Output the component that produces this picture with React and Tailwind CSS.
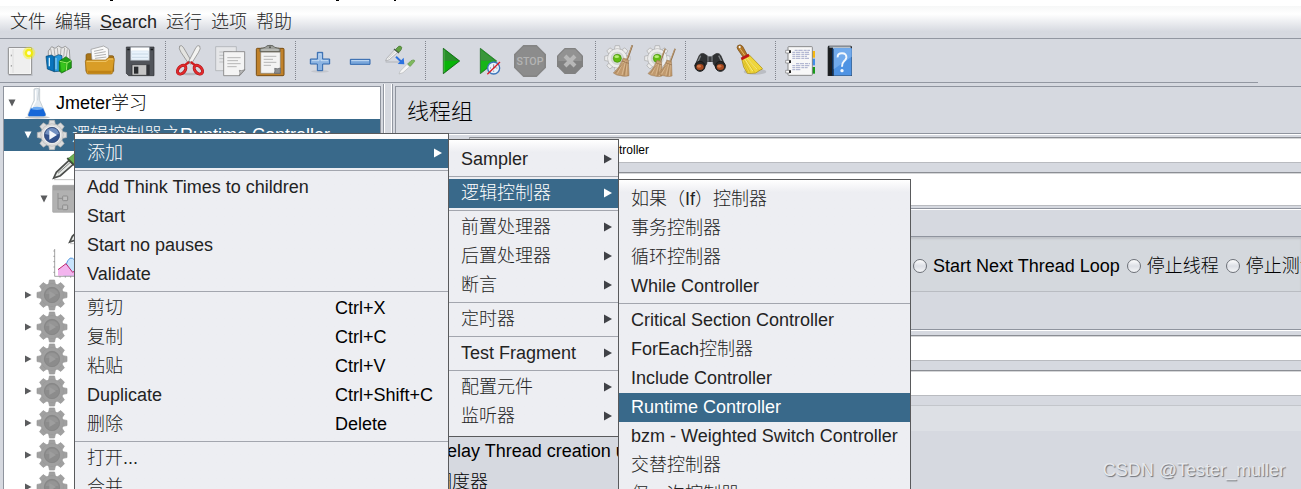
import { useState } from "react";

const TEETH = [0, 45, 90, 135, 180, 225, 270, 315];

function Gear({ cx, cy, r, fill, stroke }) {
  return (
    <g fill={fill} stroke={stroke} strokeWidth="2" strokeLinejoin="round">
      {TEETH.map((angle) => (
        <path
          key={angle}
          transform={`rotate(${angle} ${cx} ${cy})`}
          d={`M${cx - r * 0.24} ${cy - r * 0.66}L${cx - r * 0.17} ${cy - r}H${cx + r * 0.17}L${cx + r * 0.24} ${cy - r * 0.66}z`}
        />
      ))}
      <circle cx={cx} cy={cy} r={r * 0.76} />
      <circle cx={cx} cy={cy} r={r * 0.72} stroke="none" />
    </g>
  );
}

function Broom({ transform }) {
  return (
    <g transform={transform}>
      <path d="M97 19L80 66" stroke="#8a6a44" strokeWidth="5" />
      <path d="M96 20L79 64" stroke="#d9b589" strokeWidth="2" />
      <path d="M70 57L85 62L87 110Q74 114 62 110Q50 110 40 102Q58 88 70 57z" fill="#c19a6e" stroke="#93714b" strokeWidth="1.5" />
      <path d="M73 64L52 104M77 66L66 108M81 68L78 110" stroke="#e6c9a3" strokeWidth="2" fill="none" />
      <path d="M70 72L46 102M79 72L72 110" stroke="#93714b" strokeWidth="1.500" fill="none" />
      <path d="M66 66L86 73" stroke="#85613c" strokeWidth="2" />
    </g>
  );
}

function ClearGear() {
  return (
    <>
      <Gear cx={52} cy={58} r={38} fill="#ececec" stroke="#a8a8a8" />
      <circle cx="52" cy="58" r="19" fill="#d4d8d4" stroke="#bdbdbd" />
      <circle cx="52" cy="58" r="12" fill="#63bd12" stroke="#3f8a08" strokeWidth="2" />
      <ellipse cx="50" cy="53" rx="7" ry="4" fill="#b8ec78" />
    </>
  );
}

const PLAY_PATH = "M40 28L89 66L40 104z";

const ICONS = {
  fresh: (
    <>
      <path d="M26 108h72" stroke="#a5a8ad" strokeWidth="3" />
      <rect x="25" y="26" width="70" height="80" rx="2" fill="#efefef" stroke="#777" strokeWidth="2.5" />
      <rect x="28" y="29" width="64" height="74" fill="none" stroke="#fff" strokeWidth="2" />
      <path d="M39 30v72" stroke="#d5d5d5" strokeWidth="2" />
      <path d="M34 47v5M34 78v5" stroke="#999" strokeWidth="3" />
      <circle cx="87" cy="42" r="19" fill="#f7f000" opacity="0.4" />
      <circle cx="87" cy="42" r="13" fill="#f5ed00" opacity="0.85" />
      <circle cx="87" cy="42" r="6" fill="#fffde0" />
    </>
  ),
  templates: (
    <>
      <path d="M25 36L35 23L45 28L55 21L66 27L76 22L88 32L90 64L55 82L25 72z" fill="#e8e8e8" stroke="#777" strokeWidth="2" />
      <path d="M32 30l5 26M42 28l4 30M52 27l3 30M63 28l-2 26M74 27l-3 26M82 31l-3 22" stroke="#8f8f8f" strokeWidth="2" />
      <path d="M18 52L34 48L43 53V98L22 90z" fill="#0874bd" stroke="#04436d" strokeWidth="2" />
      <path d="M43 53L56 47L66 50V96L43 98z" fill="#2598dc" stroke="#04436d" strokeWidth="2" />
      <path d="M28 56v26" stroke="#d2efff" strokeWidth="4" />
      <path d="M48 57v34" stroke="#a8dcfa" strokeWidth="3" />
      <path d="M58 66L78 53L94 65V87L65 102L58 96z" fill="#1d9f14" stroke="#116108" strokeWidth="2" />
      <path d="M59 67L81 72L94 65M81 72L79 95" fill="none" stroke="#98ee62" strokeWidth="3" />
      <path d="M61 70L78 74L76 93L65 99z" fill="#37c41c" />
    </>
  ),
  open: (
    <>
      <path d="M18 49q0-5 5-5h18l6 6h50q4 0 4 4v43H18z" fill="#a87418" stroke="#7d5208" strokeWidth="2" />
      <path d="M33 31L71 21L85 29L87 76H37z" fill="#fafafa" stroke="#8f8f8f" strokeWidth="2" />
      <path d="M42 37l28-6M43 44l34-6M44 51l34-5M45 58l34-4" stroke="#a3a3a3" strokeWidth="2.5" />
      <path d="M24 105Q20 105 19 99L16 67Q16 63 21 63H77L84 56H98Q104 56 103 62L98 101Q97 105 93 105z" fill="#d99d27" stroke="#956510" strokeWidth="2" />
      <path d="M20 67H79L86 60H99" fill="none" stroke="#f6d27b" strokeWidth="2.5" />
      <path d="M23 95h72l-1 7H24z" fill="#bf8215" />
    </>
  ),
  save: (
    <>
      <path d="M19 24H102V110H26L19 103z" fill="#51545a" stroke="#2b2c2f" strokeWidth="2" />
      <path d="M32 25h56v39H32z" fill="#e9f3fc" stroke="#989fa6" strokeWidth="2" />
      <path d="M36 35h48M36 45h48M36 55h48" stroke="#b9cad9" strokeWidth="2" />
      <path d="M33 26h54v9H33z" fill="#fff" />
      <path d="M36 77h44v32H36z" fill="#c5c5c5" stroke="#2b2c2f" strokeWidth="2" />
      <rect x="42" y="83" width="13" height="21" fill="#292b2e" />
      <path d="M81 77h8v32h-8z" fill="#303236" />
      <path d="M22 29h7v5h-7zM92 29h7v5h-7z" fill="#17181a" />
    </>
  ),
  cut: (
    <>
      <ellipse cx="60" cy="105" rx="26" ry="4" fill="#b5b8be" />
      <path d="M29 21Q25 28 33 40L56 74L64 66L40 25Q34 17 29 21z" fill="#e3e3e0" stroke="#7c7c7a" strokeWidth="2" />
      <path d="M89 21Q94 28 85 41L63 76L55 69L78 25Q84 17 89 21z" fill="#f3f3f1" stroke="#7c7c7a" strokeWidth="2" />
      <circle cx="59" cy="69" r="3" fill="#777" />
      <ellipse cx="35" cy="92" rx="15" ry="10" transform="rotate(-48 35 92)" fill="none" stroke="#a40f12" strokeWidth="9" />
      <ellipse cx="35" cy="92" rx="15" ry="10" transform="rotate(-48 35 92)" fill="none" stroke="#e22b2d" strokeWidth="6" />
      <ellipse cx="85" cy="92" rx="15" ry="10" transform="rotate(48 85 92)" fill="none" stroke="#a40f12" strokeWidth="9" />
      <ellipse cx="85" cy="92" rx="15" ry="10" transform="rotate(48 85 92)" fill="none" stroke="#e22b2d" strokeWidth="6" />
      <path d="M44 79L57 69M76 79L62 69" stroke="#cf1d20" strokeWidth="7" />
    </>
  ),
  copy: (
    <>
      <path d="M17 23H79V95H17z" fill="#e5e6e8" stroke="#a5a8ab" strokeWidth="2" />
      <path d="M28 39h38M28 49h30M28 59h38M28 69h30" stroke="#b6b8ba" strokeWidth="2.5" />
      <path d="M41 38H104V93L89 110H41z" fill="#f4f4f4" stroke="#808080" strokeWidth="2.5" />
      <path d="M52 56h40M52 65h32M52 74h40M52 83h28" stroke="#a9a9a9" strokeWidth="2.5" />
      <path d="M104 92Q94 97 88 94Q92 102 88 110z" fill="#bdbdbd" stroke="#777" strokeWidth="2" />
    </>
  ),
  paste: (
    <>
      <rect x="19" y="28" width="83" height="82" rx="3" fill="#c0812a" stroke="#794d12" strokeWidth="3" />
      <path d="M32 39H91V103H32z" fill="#f3f3f3" stroke="#86816f" strokeWidth="2" />
      <path d="M41 52h38M41 61h28M41 70h38M41 79h22" stroke="#aaa" strokeWidth="2.5" />
      <path d="M91 87Q82 91 74 88Q76 96 73 103H91z" fill="#8e9092" stroke="#5c5e60" strokeWidth="2" />
      <path d="M30 38V30Q31 27 39 27L46 25Q48 19 60 19Q72 19 74 25L82 27Q89 27 90 31V38z" fill="#9d9f9b" stroke="#565852" strokeWidth="2.5" />
      <path d="M34 33H86" stroke="#d0d2cd" strokeWidth="3" />
      <circle cx="60" cy="25" r="3" fill="#565852" />
    </>
  ),
  plus: (
    <>
      <ellipse cx="60" cy="97" rx="27" ry="4" fill="#c3c6cd" />
      <path d="M52 40H68V60H89V75H68V95H52V75H31V60H52z" fill="#8cb4e2" stroke="#2e66ac" strokeWidth="3" />
      <path d="M57 45H63V65H84M57 45V65H36" fill="none" stroke="#d2e4f7" strokeWidth="2.5" />
    </>
  ),
  minus: (
    <>
      <path d="M31 61H90V76H31z" fill="#79a6db" stroke="#2e66ac" strokeWidth="3" />
      <path d="M34 65H87" stroke="#c8def5" strokeWidth="3" />
    </>
  ),
  toggle: (
    <>
      <path d="M17 69H58" stroke="#b0b3b8" strokeWidth="3" />
      <path d="M17 66L20 58L44 32L53 40L28 62z" fill="#f4f4f4" stroke="#9a9c9e" strokeWidth="2" />
      <path d="M24 59L45 38" stroke="#b0b3b5" strokeWidth="2" />
      <path d="M42 30L57 42" stroke="#4f5a4f" strokeWidth="4" />
      <path d="M47 31L56 22Q62 19 65 25Q66 31 59 38L55 39z" fill="#64a044" stroke="#3c6e28" strokeWidth="2" />
      <path d="M57 105L61 96L81 76L89 83L69 101z" fill="#f6f6f6" stroke="#b4b6b8" strokeWidth="2" />
      <path d="M83 75L93 65Q105 60 104 67L91 82z" fill="#7eb95d" stroke="#5e9442" strokeWidth="2" />
      <path d="M48 53L64 68" stroke="#2c72e0" strokeWidth="6" />
      <path d="M73 76L71 56L53 75z" fill="#2c72e0" />
    </>
  ),
  start: (
    <>
      <path d={PLAY_PATH} fill="#12a012" stroke="#0d5c10" strokeWidth="2.5" />
      <path d="M42 32L84 65H42z" fill="#2a8f2b" />
      <path d="M42 66H86L42 100z" fill="#08b408" />
      <path d="M42 32v68" stroke="#6cc86b" strokeWidth="2" />
    </>
  ),
  startNoTimers: (
    <>
      <g transform="translate(-9 0)">
        <path d={PLAY_PATH} fill="#12a012" stroke="#2d7230" strokeWidth="2.5" />
        <path d="M42 32L84 65H42z" fill="#3a963b" />
        <path d="M42 66H86L42 100z" fill="#17b517" />
      </g>
      <circle cx="71" cy="87" r="18" fill="#e8f1fb" stroke="#3b74bb" strokeWidth="4" />
      <path d="M71 76v12l7-5M60 87h3M79 87h3M71 98v-3" fill="none" stroke="#67707b" strokeWidth="2.5" />
      <path d="M52 106L90 69" stroke="#d91d25" strokeWidth="4" />
    </>
  ),
  stop: (
    <>
      <path d="M40 18H80L108 46V86L80 114H40L12 86V46z" fill="#868686" />
      <path d="M41 22H79L104 47V85L79 110H41L16 85V47z" fill="#8c8c8c" stroke="#7e7e7e" strokeWidth="1" />
      <text x="60" y="77" textAnchor="middle" fontSize="32" fill="#b4b4b4" className="font-['Roboto',sans-serif] font-medium">
        STOP
      </text>
    </>
  ),
  shutdown: (
    <>
      <path d="M44 27H76L99 50V82L76 105H44L21 82V50z" fill="#818181" />
      <path d="M45 31H75L95 51V66H25V51z" fill="#929292" />
      <path d="M45 51L75 81M75 51L45 81" stroke="#b7b7b7" strokeWidth="12" />
    </>
  ),
  clear: (
    <>
      <ClearGear />
      <Broom />
    </>
  ),
  clearAll: (
    <>
      <ClearGear />
      <Broom transform="translate(-12 12) scale(0.900)" />
      <Broom transform="translate(18 12) scale(0.900)" />
    </>
  ),
  search: (
    <>
      <path d="M27 51Q31 41 42 44L53 51L50 75L38 91L14 81z" fill="#303234" stroke="#222" strokeWidth="2" />
      <path d="M93 51Q89 41 78 44L67 51L70 75L82 91L106 81z" fill="#303234" stroke="#222" strokeWidth="2" />
      <path d="M51 52h18v17H51z" fill="#3b3d40" />
      <path d="M54 50v18M66 50v18" stroke="#a8acb0" strokeWidth="2" />
      <path d="M32 50L22 72M86 50L97 72" stroke="#808487" strokeWidth="4" />
      <circle cx="30" cy="82" r="15" fill="#292827" stroke="#191919" strokeWidth="3" />
      <ellipse cx="30" cy="84" rx="11" ry="9" fill="#a94b21" />
      <ellipse cx="27" cy="82" rx="6" ry="4" fill="#d2784b" />
      <circle cx="91" cy="82" r="15" fill="#292827" stroke="#191919" strokeWidth="3" />
      <ellipse cx="91" cy="84" rx="11" ry="9" fill="#a94b21" />
      <ellipse cx="88" cy="82" rx="6" ry="4" fill="#d2784b" />
    </>
  ),
  resetSearch: (
    <>
      <ellipse cx="75" cy="98" rx="34" ry="9" fill="#babdc3" />
      <path d="M23 20Q31 14 38 22L52 48L39 54L24 32Q19 26 23 20z" fill="#b27626" stroke="#71450e" strokeWidth="2" />
      <path d="M28 26L45 50" stroke="#e5b867" strokeWidth="3" />
      <circle cx="29" cy="24" r="4" fill="#fff" stroke="#71450e" />
      <path d="M35 59L57 47L97 88Q99 91 91 93L77 102Q63 104 52 103L41 84z" fill="#efd63a" stroke="#a4870a" strokeWidth="2" />
      <path d="M42 64L61 100M47 61L74 100M52 58L86 94M41 71L53 99" stroke="#cfae1c" strokeWidth="2" />
      <path d="M44 59L68 96M50 56L82 91" stroke="#fff6a0" strokeWidth="2" />
      <path d="M34 60L57 48" stroke="#bd1716" strokeWidth="8" />
    </>
  ),
  functions: (
    <>
      <path d="M96 36h9v20h-9z" fill="#f5b70f" />
      <path d="M96 59h9v20h-9z" fill="#428ee8" />
      <path d="M96 84h9v20h-9z" fill="#189a1b" />
      <rect x="24" y="23" width="73" height="86" rx="2" fill="#f8f8f8" stroke="#777" strokeWidth="2.5" />
      <path d="M44 34h46M37 40h50M37 46h52M37 52h44M37 58h50M48 74h42M37 80h52M37 86h46M37 92h24" stroke="#7a84b4" strokeWidth="2" strokeDasharray="9 2 13 3" />
      <path d="M17 34h12v8H17zM17 64h12v8H17zM17 94h12v8H17z" fill="#fff" stroke="#777" strokeWidth="2" />
      <path d="M27 34h6v8h-6zM27 64h6v8h-6zM27 94h6v8h-6z" fill="#272727" />
    </>
  ),
  help: (
    <>
      <path d="M25 20H92Q96 20 96 25V111H23V24z" fill="#24272b" />
      <path d="M28 22H92V30H28z" fill="#b9c2cb" />
      <path d="M41 28H95V110H41z" fill="#4f93e3" />
      <path d="M41 28H95V53L41 91z" fill="#71aaec" />
      <path d="M25 26h14v84H25z" fill="#1b1d20" />
      <path d="M38 28v82" stroke="#09376f" strokeWidth="3" />
      <path d="M53 55Q52 43 66 43Q80 43 79 56Q78 63 71 68Q66 72 66 83" fill="none" stroke="#f4f8fd" strokeWidth="6" />
      <circle cx="66" cy="95" r="5" fill="#f4f8fd" />
    </>
  ),
};

const TOOL_GROUPS = [
  ["fresh", "templates", "open", "save"],
  ["cut", "copy", "paste"],
  ["plus", "minus", "toggle"],
  ["start", "startNoTimers", "stop", "shutdown"],
  ["clear", "clearAll"],
  ["search", "resetSearch"],
  ["functions", "help"],
];

const CONTROLLER_MENU = [
  { label: "如果（If）控制器" },
  { label: "事务控制器" },
  { label: "循环控制器" },
  { label: "While Controller" },
  null,
  { label: "Critical Section Controller" },
  { label: "ForEach控制器" },
  { label: "Include Controller" },
  { label: "Runtime Controller", active: true },
  { label: "bzm - Weighted Switch Controller" },
  { label: "交替控制器" },
  { label: "仅一次控制器" },
];

const ADD_MENU = [
  { label: "Sampler", more: true },
  null,
  { label: "逻辑控制器", more: true, active: true, items: CONTROLLER_MENU, width: "w-[293px]" },
  null,
  { label: "前置处理器", more: true },
  { label: "后置处理器", more: true },
  { label: "断言", more: true },
  null,
  { label: "定时器", more: true },
  null,
  { label: "Test Fragment", more: true },
  null,
  { label: "配置元件", more: true },
  { label: "监听器", more: true },
];

const CONTEXT_MENU = [
  { label: "添加", more: true, active: true, items: ADD_MENU, width: "w-[171px]" },
  null,
  { label: "Add Think Times to children" },
  { label: "Start" },
  { label: "Start no pauses" },
  { label: "Validate" },
  null,
  { label: "剪切", keys: "Ctrl+X" },
  { label: "复制", keys: "Ctrl+C" },
  { label: "粘贴", keys: "Ctrl+V" },
  { label: "Duplicate", keys: "Ctrl+Shift+C" },
  { label: "删除", keys: "Delete" },
  null,
  { label: "打开..." },
  { label: "合并" },
];

const TREE = [
  { indent: "pl-0", arrow: "down", icon: "flask", label: "Jmeter学习" },
  { indent: "pl-4", arrow: "down", icon: "gear", label: "逻辑控制器之Runtime Controller", selected: true },
  { indent: "pl-8", icon: "dropper" },
  { indent: "pl-8", arrow: "down", icon: "controller" },
  { indent: "pl-12", icon: "dropper" },
  { indent: "pl-8", icon: "graph" },
  { indent: "pl-4", arrow: "right", icon: "grayGear" },
  { indent: "pl-4", arrow: "right", icon: "grayGear" },
  { indent: "pl-4", arrow: "right", icon: "grayGear" },
  { indent: "pl-4", arrow: "right", icon: "grayGear" },
  { indent: "pl-4", arrow: "right", icon: "grayGear" },
  { indent: "pl-4", arrow: "right", icon: "grayGear" },
  { indent: "pl-4", arrow: "right", icon: "grayGear" },
];

const TREE_ICONS = {
  flask: (
    <>
      <ellipse cx="52" cy="91" rx="38" ry="4" fill="#c9c9c9" />
      <path d="M42 6Q50 2 59 6V40L77 81Q79 89 71 89H30Q22 89 24 81L42 40z" fill="#e4ebf1" stroke="#b4bcc3" strokeWidth="2" />
      <path d="M33 63Q50 68 69 63L77 82Q78 88 71 88H30Q23 88 25 82z" fill="#1667d8" />
      <ellipse cx="51" cy="64" rx="18" ry="5" fill="#6ba9f2" />
      <path d="M47 10V42L36 62" fill="none" stroke="#fff" strokeWidth="4" />
      <path d="M58 1L53 40" stroke="#bcc4ca" strokeWidth="2" />
    </>
  ),
  gear: (
    <>
      <Gear cx={48} cy={48} r={44} fill="#dcdcdc" stroke="#b1b1b1" />
      <circle cx="48" cy="48" r="27" fill="#f4f4f4" />
      <circle cx="48" cy="48" r="23" fill="#33528c" stroke="#263d69" strokeWidth="2" />
      <path d="M27 45Q31 27 48 27Q65 27 69 45Q48 52 27 45z" fill="#7390c0" />
      <path d="M40 34L63 48L40 62z" fill="#f3f6fb" />
    </>
  ),
  grayGear: (
    <>
      <Gear cx={48} cy={48} r={45} fill="#a0a0a0" stroke="#999" />
      <circle cx="48" cy="48" r="23" fill="#8c8c8c" stroke="#808080" strokeWidth="2" />
      <path d="M29 45Q32 30 48 30Q64 30 67 45z" fill="#959595" />
      <path d="M40 36L60 48L40 60z" fill="#9e9e9e" />
    </>
  ),
  dropper: (
    <>
      <path d="M6 86H80" stroke="#c5c5c5" strokeWidth="3" />
      <path d="M5 81L13 64L51 28L64 40L25 74z" fill="#e8ebe8" stroke="#4b4d4b" strokeWidth="5" />
      <path d="M18 67L54 35" stroke="#888" strokeWidth="3" />
      <path d="M46 21L71 46" stroke="#3d4a3a" strokeWidth="6" />
      <path d="M50 22L68 7Q84 5 86 19Q85 27 70 42z" fill="#6cb052" stroke="#407b2b" strokeWidth="2" />
    </>
  ),
  controller: (
    <>
      <rect x="2" y="7" width="86" height="81" rx="2" fill="#b1b1b1" stroke="#a2a2a2" strokeWidth="2" />
      <path d="M3 8h84v14H3z" fill="#a3a3a3" />
      <path d="M18 30V78H32M18 46H32" fill="none" stroke="#8d8d8d" strokeWidth="3" />
      <rect x="32" y="39" width="15" height="14" rx="2" fill="#bdbdbd" stroke="#8d8d8d" strokeWidth="3" />
      <rect x="32" y="66" width="15" height="14" rx="2" fill="#bdbdbd" stroke="#8d8d8d" strokeWidth="3" />
    </>
  ),
  graph: (
    <>
      <path d="M34 84Q46 24 62 34L90 60V84z" fill="#c8e3fb" stroke="#5599df" strokeWidth="3" />
      <path d="M18 68L42 50L62 76L90 55V86H18z" fill="#f3b4ee" />
      <path d="M18 68L42 50L62 76L90 55" fill="none" stroke="#bd2470" strokeWidth="3" />
      <path d="M8 6V88H90M4 12h4M4 28h4M4 44h4M4 60h4M4 76h4M24 88v4M40 88v4M56 88v4" fill="none" stroke="#777" strokeWidth="2" />
    </>
  ),
};

function Menu({ items, width, className }) {
  return (
    <ul role="menu" className={`absolute z-10 border border-[#595a5c] bg-[#edeef2] bg-linear-to-b from-white from-0% to-[#edeef2] to-[12px] py-[5px] ${width} ${className}`}>
      {items.map((item, index) =>
        item === null ? (
          <li key={index} role="separator" className="h-[5px] pt-[2px]">
            <div className="h-px bg-[#a3a6ae]" />
          </li>
        ) : (
          <li key={index} className="relative">
            <button
              type="button"
              role="menuitem"
              className={`flex h-[29px] w-full items-center pr-[6px] pb-[2px] pl-3 text-left whitespace-nowrap ${item.active ? "bg-[#39698a] text-white" : "text-[#232323]"}`}
            >
              <span className="flex-1">{item.label}</span>
              {item.keys && <span className="w-[107px] text-black">{item.keys}</span>}
              {item.more && (
                <svg viewBox="0 0 8 10" className={`h-[10px] w-2 ${item.active ? "fill-white" : "fill-[#404247]"}`}>
                  <path d="M0 0.500L8 5L0 9.500z" />
                </svg>
              )}
            </button>
            {item.items && <Menu items={item.items} width={item.width} className="top-0 left-full" />}
          </li>
        )
      )}
    </ul>
  );
}

function TreeRow({ row }) {
  return (
    <li className={`flex h-8 items-center whitespace-nowrap ${row.indent} ${row.selected ? "bg-[#39698a] text-white" : "text-black"}`}>
      <span className="flex w-4 shrink-0 justify-center">
        {row.arrow && (
          <svg viewBox="0 0 8 8" className={`size-2 ${row.selected ? "fill-white" : "fill-[#5b5c5e]"}`}>
            <path d={row.arrow === "down" ? "M0.500 0.500H7.500L4 7.500z" : "M1 0.500L7.500 4L1 7.500z"} />
          </svg>
        )}
      </span>
      <svg viewBox="0 0 96 96" className="size-8 shrink-0">
        {TREE_ICONS[row.icon]}
      </svg>
      {row.label && <span className="pl-1">{row.label}</span>}
    </li>
  );
}

function Etched() {
  return <div className="h-[2px] shrink-0 border-t border-b border-t-[#8f949e] border-b-white" />;
}

function Field({ id, label, height, value, onChange }) {
  return (
    <div className={`flex shrink-0 items-center pl-[11px] ${height}`}>
      <label htmlFor={id} className="w-[62px] shrink-0">
        {label}
      </label>
      <input
        id={id}
        value={value}
        onChange={onChange}
        className="h-full min-w-0 flex-1 border border-r-0 border-t-[#8b8e94] border-b-[#b9bbc0] border-l-[#a2a5ab] bg-white pb-[3px] pl-[7px] text-xs text-black shadow-[inset_0_1px_0_#d5d6d8] outline-none"
      />
    </div>
  );
}

function Radio({ label, checked, onChange }) {
  return (
    <label className="flex shrink-0 items-center gap-[6px] whitespace-nowrap">
      <input
        type="radio"
        name="onError"
        checked={checked}
        onChange={onChange}
        className="size-[14px] appearance-none rounded-full border border-[#6d7178] bg-linear-to-b from-white via-[#dcdfe5] to-[#f4f5f7]"
      />
      {label}
    </label>
  );
}

function Check({ label }) {
  return (
    <label className="flex h-[31px] items-center gap-[6px] whitespace-nowrap">
      <input type="checkbox" className="size-4 appearance-none rounded-xs border border-[#6d7178] bg-[#eceef2]" />
      {label}
    </label>
  );
}

export default function App() {
  const [name, setName] = useState("逻辑控制器之Runtime Controller");
  const [comment, setComment] = useState("");
  const [threads, setThreads] = useState("");
  const [rampUp, setRampUp] = useState("");
  const [onError, setOnError] = useState("");

  return (
    <div className="relative flex h-screen flex-col overflow-hidden bg-[#d6d9e0] font-['Liberation_Sans','Noto_Sans_CJK_SC',sans-serif] text-[18px] leading-[22px] font-light text-black">
      <div className="flex h-[6px] shrink-0 bg-white">
        <span className="ml-[110px] h-px w-[3px] bg-black" />
        <span className="ml-[223px] h-px w-[3px] bg-black" />
        <span className="ml-[55px] h-px w-[2px] bg-black" />
      </div>

      <nav className="flex h-[33px] shrink-0 items-center gap-[9px] border-b border-[#9297a1] bg-linear-to-b from-[#f6f7f7] via-white via-25% to-[#d6d9e0] to-80% pl-[10px] text-[#232323]">
        <button type="button">文件</button>
        <button type="button">编辑</button>
        <button type="button">
          <span className="underline">S</span>earch
        </button>
        <button type="button">运行</button>
        <button type="button">选项</button>
        <button type="button">帮助</button>
      </nav>

      <div className="mr-[43px] flex h-11 shrink-0 border-b border-[#9297a1]">
        {TOOL_GROUPS.map((group, index) => (
          <div key={group[0]} className="flex">
            {index > 0 && <span className="my-[2px] mr-1 ml-[5px] w-px border-l border-dotted border-[#80848d]" />}
            {group.map((tool) => (
              <button key={tool} type="button" aria-label={tool} className="h-[43px] w-10">
                <svg viewBox="0 0 120 129" className="h-[43px] w-10" fill="none">
                  {ICONS[tool]}
                </svg>
              </button>
            ))}
          </div>
        ))}
      </div>

      <main className="flex min-h-0 flex-1 pt-[3px] pl-[3px]">
        <ul className="w-[378px] shrink-0 overflow-hidden border border-b-0 border-[#8f949e] bg-white">
          {TREE.map((row, index) => (
            <TreeRow key={index} row={row} />
          ))}
        </ul>

        <div className="mx-[2px] -mt-[2px] flex w-[10px] shrink-0 justify-between">
          <span className="w-[2px] border-r border-l border-r-white border-l-[#9297a1]" />
          <span className="w-[2px] border-r border-l border-r-[#9297a1] border-l-white" />
        </div>

        <section className="flex min-w-0 flex-1 flex-col overflow-hidden border-t border-l border-[#8f949e]">
          <h1 className="flex h-[46px] shrink-0 items-center pt-1 pl-[11px] text-[22px]">线程组</h1>
          <Etched />
          <div className="flex shrink-0 flex-col gap-[9px] py-[2px]">
            <Field id="name" label="名称：" height="h-[26px]" value={name} onChange={(event) => setName(event.target.value)} />
            <Field id="comment" label="注释：" height="h-[34px]" value={comment} onChange={(event) => setComment(event.target.value)} />
          </div>
          <Etched />
          <div className="h-[26px] shrink-0" />
          <div className="flex h-[56px] shrink-0 items-center gap-[7px] border-t border-b border-t-[#8f949e] border-b-[#b9bcc2] bg-[#d4d8dd] pt-1 pl-[517px] shadow-[inset_0_2px_2px_#bfc2c8]">
            <Radio label="Start Next Thread Loop" checked={onError === "next"} onChange={() => setOnError("next")} />
            <Radio label="停止线程" checked={onError === "thread"} onChange={() => setOnError("thread")} />
            <Radio label="停止测试" checked={onError === "test"} onChange={() => setOnError("test")} />
          </div>
          <div className="h-[37px] shrink-0" />
          <Etched />
          <div className="flex shrink-0 flex-col gap-[9px] pt-1">
            <Field id="threads" label="线程数" height="h-[26px]" value={threads} onChange={(event) => setThreads(event.target.value)} />
            <Field id="rampUp" label="时间" height="h-[26px]" value={rampUp} onChange={(event) => setRampUp(event.target.value)} />
            <div className="h-[26px] border-t border-[#c3c6cb] bg-[#dde0e5]" />
          </div>
          <div className="shrink-0 pt-1 pl-4">
            <Check label="Delay Thread creation until needed" />
            <Check label="调度器" />
          </div>
        </section>
      </main>

      <Menu items={CONTEXT_MENU} width="w-[375px]" className="top-[133px] left-[74px]" />

      <p className="absolute right-4 bottom-2 text-[18px] text-[#e6e8ec] [text-shadow:1px_1px_1px_#6f7278]">CSDN @Tester_muller</p>
    </div>
  );
}
